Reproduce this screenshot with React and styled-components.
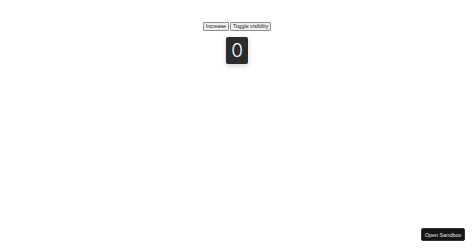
import React, { useState } from 'react';
import styled, { createGlobalStyle } from 'styled-components';

const GlobalStyle = createGlobalStyle`
  html, body {
    margin: 0;
    padding: 0;
    background: #ffffff;
    font-family: "Liberation Sans", Arial, sans-serif;
  }
`;

const Page = styled.div`
  width: 474px;
  height: 248px;
  position: relative;
  display: flex;
  flex-direction: column;
  align-items: center;
  padding-top: 22px;
  box-sizing: border-box;
`;

const Controls = styled.div`
  display: flex;
  gap: 1px;
`;

const Button = styled.button`
  font-family: "Liberation Sans", Arial, sans-serif;
  font-size: 5.3px;
  line-height: 7px;
  height: 9px;
  padding: 0 2px;
  margin: 0;
  border: 1px solid #8f8f8f;
  border-radius: 1px;
  background: #efefef;
  color: #222;
`;

const Counter = styled.div`
  margin-top: 6px;
  width: 22px;
  height: 27px;
  border-radius: 2px;
  background: #2b2b2b;
  color: #ffffff;
  display: flex;
  align-items: center;
  justify-content: center;
  font-family: Inter, "Liberation Sans", sans-serif;
  font-weight: 300;
  font-size: 19px;
  box-shadow: 0 2px 5px rgba(0, 0, 0, 0.18);
`;

const SandboxButton = styled.div`
  position: absolute;
  right: 9px;
  bottom: 7px;
  width: 44px;
  height: 13px;
  border-radius: 2px;
  background: #151515;
  border: 1px solid #333;
  box-sizing: border-box;
  color: #e8e8e8;
  font-size: 5.5px;
  display: flex;
  align-items: center;
  justify-content: center;
`;

export default function App() {
  const [count, setCount] = useState(0);
  const [visible, setVisible] = useState(true);
  return (
    <>
      <GlobalStyle />
      <Page>
        <Controls>
          <Button onClick={() => setCount(count + 1)}>Increase</Button>
          <Button onClick={() => setVisible(!visible)}>Toggle visibility</Button>
        </Controls>
        {visible && <Counter>{count}</Counter>}
        <SandboxButton>Open Sandbox</SandboxButton>
      </Page>
    </>
  );
}
